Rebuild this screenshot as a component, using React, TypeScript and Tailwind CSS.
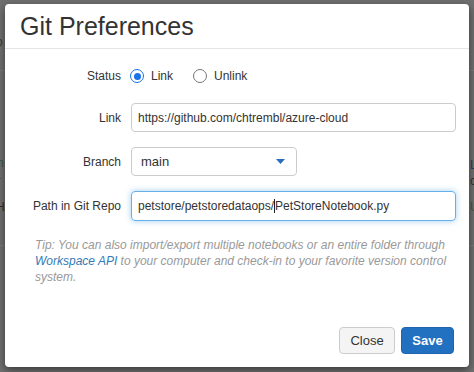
import React from 'react';

function Radio({ checked, label }: { checked?: boolean; label: string }) {
  return (
    <label className="flex items-center gap-[7px]">
      {checked ? (
        <span className="flex h-[14px] w-[14px] items-center justify-center rounded-full border-[1.5px] border-[#1a73e8] bg-white">
          <span className="h-[7px] w-[7px] rounded-full bg-[#1a73e8]" />
        </span>
      ) : (
        <span className="h-[14px] w-[14px] rounded-full border border-[#767676] bg-white" />
      )}
      <span>{label}</span>
    </label>
  );
}

function Row({ label, children }: { label: string; children: React.ReactNode }) {
  return (
    <div className="flex items-center">
      <div className="w-[101px] shrink-0 text-right">{label}</div>
      <div className="ml-[10px] flex-1">{children}</div>
    </div>
  );
}

export default function App() {
  return (
    <div
      className="relative h-[372px] w-[474px] overflow-hidden bg-[#707070] text-[12px] text-[#333]"
      style={{ fontFamily: '"Liberation Sans", Arial, sans-serif' }}
    >
      {/* page behind the overlay */}
      <div className="absolute left-0 top-[70px] h-px w-full bg-[#7c7c7c]" />
      <div className="absolute left-0 top-[245px] h-px w-full bg-[#7c7c7c]" />
      <div className="absolute left-[-4px] top-[33px] text-[#3a3a3a]">o</div>
      <div className="absolute left-[-3px] top-[154px] text-[#3d5a3d]">n</div>
      <div className="absolute left-[-3px] top-[172px] text-[#3d5a3d]">r</div>
      <div className="absolute left-[-4px] top-[198px] text-[#2e2e2e]">H</div>
      <div className="absolute left-[470px] top-[156px] text-[#2a3f66]">L</div>
      <div className="absolute left-[470px] top-[172px] text-[#333]">c</div>
      <div className="absolute left-[470px] top-[198px] text-[#3d5a3d]">U</div>

      {/* modal */}
      <div className="absolute left-[5px] top-[4px] flex h-[363px] w-[464px] flex-col rounded-[4px] bg-white shadow-[0_3px_9px_rgba(0,0,0,0.5)]">
        <div className="flex h-[45px] items-center border-b border-[#e5e5e5] px-[15px]">
          <h1 className="text-[25px] leading-none text-[#333]">Git Preferences</h1>
        </div>

        <div className="flex flex-1 flex-col px-[15px] pt-[17px]">
          <div className="flex h-[20px] items-center">
            <div className="w-[101px] shrink-0 text-right">Status</div>
            <div className="ml-[9px] flex items-center gap-[20px]">
              <Radio checked label="Link" />
              <Radio label="Unlink" />
            </div>
          </div>

          <div className="mt-[17px] flex flex-col gap-[15px]">
            <Row label="Link">
              <div className="flex h-[29px] w-[325px] items-center rounded-[4px] border border-[#ccc] px-[6px] text-[#333]">
                https://github.com/chtrembl/azure-cloud
              </div>
            </Row>
            <Row label="Branch">
              <div className="flex h-[29px] w-[166px] items-center justify-between rounded-[4px] border border-[#ccc] pl-[9px] pr-[11px] text-[13px] text-[#333]">
                <span>main</span>
                <svg width="9" height="5" viewBox="0 0 9 5">
                  <path d="M0 0h9L4.5 5z" fill="#2a6ebb" />
                </svg>
              </div>
            </Row>
            <Row label="Path in Git Repo">
              <div className="flex h-[30px] w-[325px] items-center rounded-[4px] border border-[#66afe9] px-[6px] text-[#333] shadow-[0_0_6px_rgba(102,175,233,0.6)]">
                <span>petstore/petstoredataops/</span>
                <span className="inline-block h-[14px] w-px bg-[#222]" />
                <span>PetStoreNotebook.py</span>
              </div>
            </Row>
          </div>

          <p className="mt-[16px] pl-[15px] italic leading-[16px] text-[#999]">
            Tip: You can also import/export multiple notebooks or an entire folder through{' '}
            <a className="text-[#337ab7]">Workspace API</a> to your computer and check-in to your favorite version control
            system.
          </p>
        </div>

        <div className="flex justify-end gap-[6px] px-[15px] pb-[13px]">
          <button className="h-[27px] w-[56px] rounded-[4px] border border-[#ccc] bg-[#f4f4f4] text-[13px] text-[#333]">
            Close
          </button>
          <button className="h-[27px] w-[53px] rounded-[4px] border border-[#1f64ad] bg-[#2270c0] text-[13px] font-bold text-white">
            Save
          </button>
        </div>
      </div>
    </div>
  );
}
